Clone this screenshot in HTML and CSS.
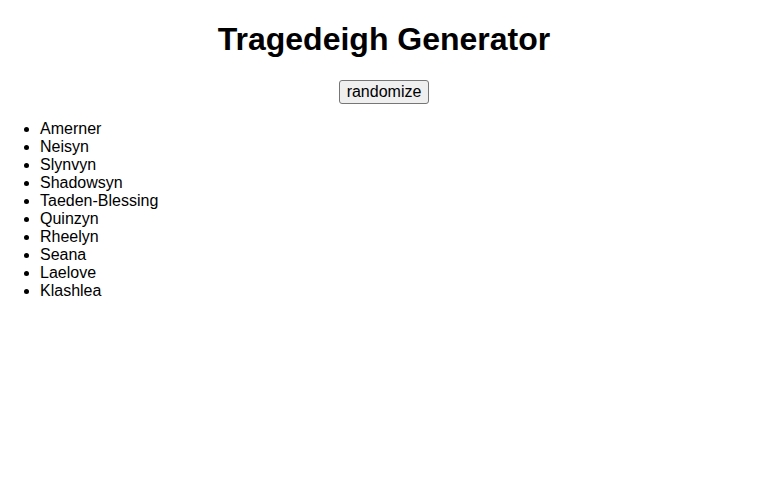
FILE: index.html
```html
<!DOCTYPE html>
<html>
<head>
<meta charset="utf-8">
<title>Tragedeigh Generator</title>
<link rel="stylesheet" href="styles.css">
</head>
<body>
<h1 class="title">Tragedeigh Generator</h1>
<div class="controls">
  <button class="randomize">randomize</button>
</div>
<ul class="names">
  <li>Amerner</li>
  <li>Neisyn</li>
  <li>Slynvyn</li>
  <li>Shadowsyn</li>
  <li>Taeden-Blessing</li>
  <li>Quinzyn</li>
  <li>Rheelyn</li>
  <li>Seana</li>
  <li>Laelove</li>
  <li>Klashlea</li>
</ul>
</body>
</html>
```
FILE: styles.css
```css
body {
  margin: 0 8px 8px;
  font-family: "Liberation Sans", Arial, sans-serif;
  font-size: 16px;
  color: #000;
  background: #fff;
}

.title {
  font-size: 32px;
  font-weight: bold;
  text-align: center;
  margin: 21.44px 0;
}

.controls {
  text-align: center;
}

.randomize {
  font-family: "Liberation Sans", Arial, sans-serif;
  font-size: 16px;
  line-height: 18px;
  padding: 1px 6px;
  border: 1px solid #767676;
  border-radius: 3px;
  background: #efefef;
  color: #000;
  height: 24px;
  width: 90px;
  vertical-align: top;
}

.names {
  margin: 16px 0;
  padding-left: 32px;
  line-height: 18px;
}
```
